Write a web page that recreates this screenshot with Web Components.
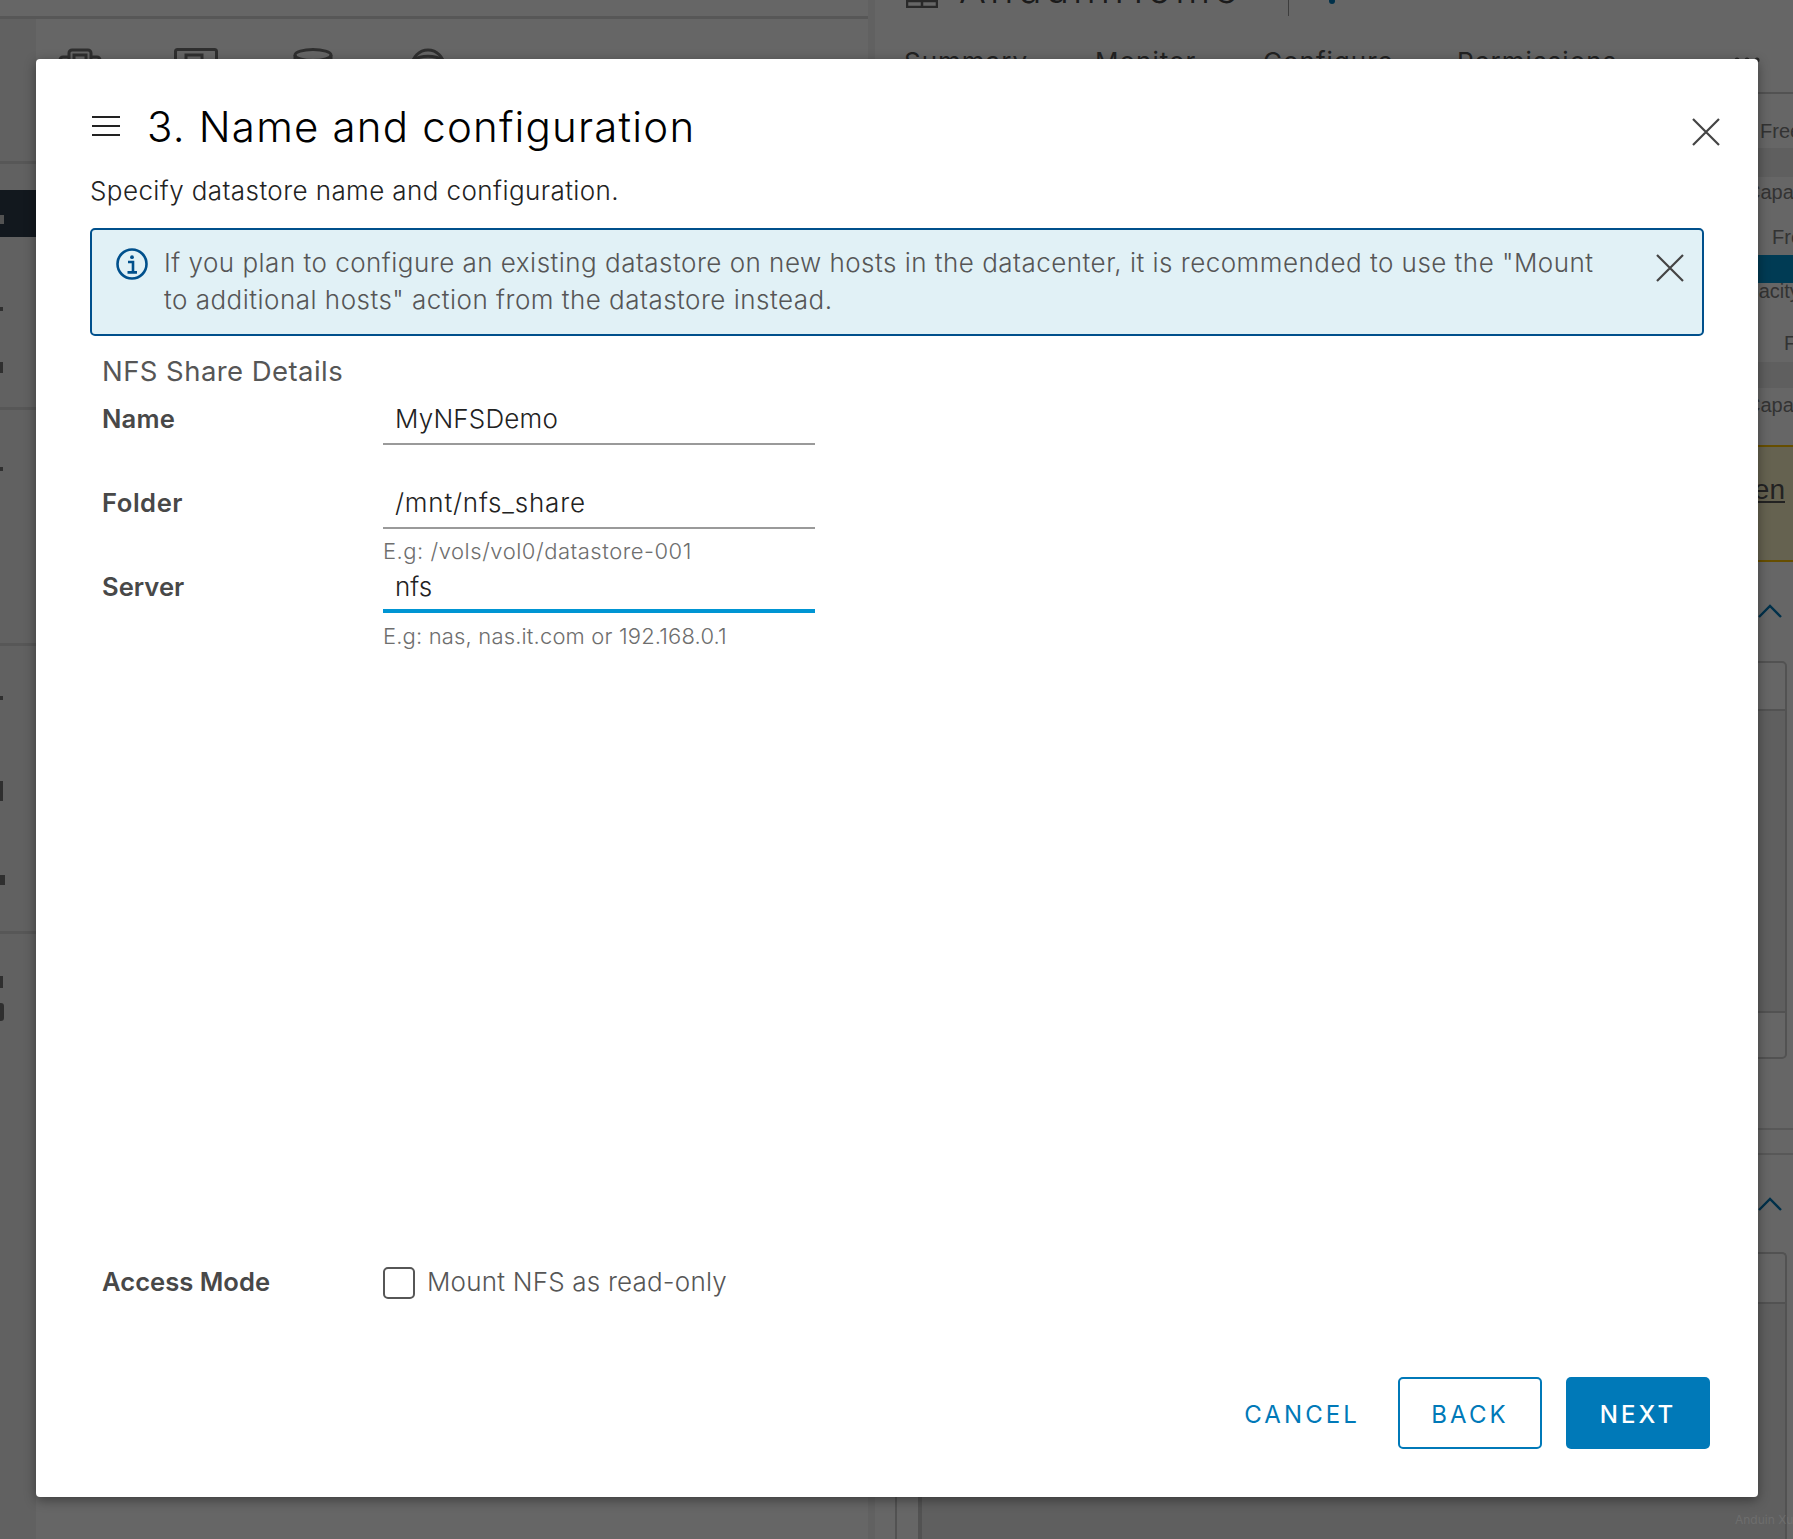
<!DOCTYPE html>
<html lang="en">
<head>
<meta charset="utf-8">
<title>New Datastore</title>
<style>
  html, body { margin: 0; height: 100%; background: #fff; }
  body { width: 1793px; height: 1539px; overflow: hidden; position: relative; font-family: "Inter", "Noto Sans", sans-serif; }
</style>
</head>
<body>
<vc-app-shell></vc-app-shell>
<vc-modal heading="3. Name and configuration" description="Specify datastore name and configuration.">
  <vc-alert>If you plan to configure an existing datastore on new hosts in the datacenter, it is recommended to use the "Mount to additional hosts" action from the datastore instead.</vc-alert>
  <vc-section-title>NFS Share Details</vc-section-title>
  <vc-form-row label="Name" value="MyNFSDemo" style="--value-ls:.18px;--label-ls:.17px"></vc-form-row>
  <vc-form-row label="Folder" value="/mnt/nfs_share" hint="E.g: /vols/vol0/datastore-001" style="--value-ls:.8px;--hint-ls:.52px;--label-ls:.54px"></vc-form-row>
  <vc-form-row label="Server" value="nfs" hint="E.g: nas, nas.it.com or 192.168.0.1" style="--hint-ls:.16px;--hint-mt:8px" focused></vc-form-row>
  <vc-check-row slot="bottom" label="Access Mode">Mount NFS as read-only</vc-check-row>
  <vc-button slot="footer" kind="flat">CANCEL</vc-button>
  <vc-button slot="footer" kind="outline">BACK</vc-button>
  <vc-button slot="footer" kind="solid">NEXT</vc-button>
</vc-modal>
<script>
const closeIcon = `<svg width="28" height="28" viewBox="0 0 28 28" fill="none" stroke="currentColor" stroke-width="2.2"><path d="M1 1 27 27M27 1 1 27"/></svg>`;

class VcAppShell extends HTMLElement {
  constructor() {
    super();
    this.attachShadow({ mode: 'open' });
    this.shadowRoot.innerHTML = `
      <style>
        :host { display: block; position: absolute; inset: 0; overflow: hidden; background: #fff; color: #565656; font-family: "Inter", sans-serif; }
        .shade { position: absolute; inset: 0; background: rgba(0,0,0,.6); }
        .panes { display: flex; height: 100%; }
        .left { width: 868px; flex: none; display: flex; flex-direction: column; }
        .splitter { width: 7px; flex: none; background: #f2f2f2; }
        .right { flex: 1; min-width: 0; display: flex; flex-direction: column; padding-left: 20px; }

        .crumb { height: 16px; flex: none; border-bottom: 3px solid #d9d9d9; }
        .left-body { flex: 1; display: grid; grid-template-columns: 36px 1fr; }
        .rail { background: #f3f3f3; display: flex; flex-direction: column; }
        .rail .line { height: 3px; background: #d9d9d9; flex: none; }
        .rail .frag { flex: none; background: #777; width: 3px; }
        .selected { height: 47px; margin-top: 26px; background: #2d3e4b; display: flex; align-items: center; flex: none; }
        .selected i { width: 4px; height: 9px; background: #ccc; margin-top: 12px; }
        .toolbar { display: flex; height: 31px; padding: 29px 0 0 22px; gap: 72px; }

        .title-row { height: 16px; flex: none; display: flex; align-items: flex-end; overflow: hidden; padding-left: 11px; }
        .title-row svg { flex: none; }
        .title-row b { font-weight: 300; font-size: 40px; line-height: 48px; letter-spacing: 4px; margin: 0 0 3px 21px; white-space: nowrap; color: #444; width: 329px; flex: none; }
        .title-row .sep { width: 1px; height: 16px; background: #999; flex: none; }
        .title-row .dot { width: 6px; height: 6px; border-radius: 50%; background: #0079b8; margin: -2px 0 0 40px; align-self: flex-start; flex: none; }
        .tabs { height: 78px; flex: none; padding: 28px 0 0 9px; box-sizing: border-box; display: flex; font-size: 26px; letter-spacing: 1px; line-height: 36px; color: #555; border-bottom: 2px solid #ccc; overflow: hidden; }
        .tabs span { display: block; flex: none; }
        .tabs svg { flex: none; }
        .outer { flex: 1; border-left: 2px solid #ccc; padding-left: 21px; min-height: 0; min-width: 0; display: flex; }
        .inner { flex: 1; min-width: 0; overflow: hidden; border-left: 2px solid #ccc; display: flex; flex-direction: column; font: 20px "Liberation Sans", sans-serif; color: #808080; }
        .row { flex: none; display: flex; align-items: center; white-space: nowrap; box-sizing: border-box; }
        .shaded { background: #eee; }
        .warn { flex: none; height: 117px; margin-top: 20px; background: #fdf4c7; border-top: 2px solid #ffc300; border-bottom: 2px solid #ffc300; box-sizing: border-box; font-size: 28px; color: #555; text-decoration: underline; display: flex; padding: 0 8px 28px 0; align-items: center; justify-content: flex-end; }
        .chev { flex: none; display: block; margin-left: 838px; }
        .card { flex: none; margin-right: 6px; border: 2px solid #ccc; border-radius: 5px; box-sizing: border-box; display: flex; flex-direction: column; }
        .card .head { height: 46px; flex: none; border-bottom: 2px solid #ccc; }
        .card .mid { flex: 1; background: #eee; }
        .card .foot { height: 44px; flex: none; border-top: 2px solid #ccc; }
        .mark { position: absolute; left: 1735px; top: 1512px; font: 12px "Inter", sans-serif; color: #7a7a7a; opacity: .55; white-space: nowrap; }
      </style>
      <div class="panes">
        <div class="left">
          <div class="crumb"></div>
          <div class="left-body">
            <div class="rail">
              <div style="height:142px;flex:none"></div>
              <div class="line"></div>
              <div class="selected"><i></i></div>
              <div class="frag" style="margin-top:70px;height:4px"></div>
              <div class="frag" style="margin-top:51px;height:11px"></div>
              <div class="line" style="margin-top:34px"></div>
              <div class="frag" style="margin-top:57px;height:4px"></div>
              <div class="line" style="margin-top:172px"></div>
              <div class="frag" style="margin-top:50px;height:4px"></div>
              <div class="frag" style="margin-top:81px;height:20px"></div>
              <div class="frag" style="margin-top:74px;height:10px;width:5px"></div>
              <div class="line" style="margin-top:46px"></div>
              <div class="frag" style="margin-top:42px;height:12px"></div>
              <div class="frag" style="margin-top:15px;height:18px;width:4px;border-radius:0 3px 3px 0"></div>
            </div>
            <div class="toolbar">
              <svg width="44" height="44" viewBox="0 0 44 44" fill="none" stroke="#777" stroke-width="3"><rect x="11" y="2" width="22" height="30" rx="3"/><rect x="16" y="7" width="12" height="7"/><path d="M11 9H5a3 3 0 0 0-3 3v16M33 9h6a3 3 0 0 1 3 3v16"/></svg>
              <svg width="44" height="44" viewBox="0 0 44 44" fill="none" stroke="#777" stroke-width="3"><rect x="1.5" y="1.5" width="41" height="30" rx="2"/><rect x="12" y="7" width="16" height="16"/></svg>
              <svg width="40" height="44" viewBox="0 0 40 44" fill="none" stroke="#777" stroke-width="3" style="margin-left:3px"><ellipse cx="20" cy="7" rx="18" ry="5.5"/><path d="M2 7v28M38 7v28"/></svg>
              <svg width="36" height="44" viewBox="0 0 36 44" fill="none" stroke="#777" stroke-width="3" style="margin-left:5px"><circle cx="18" cy="18" r="16"/><path d="M3 12c8-5 22-5 30 0"/></svg>
            </div>
          </div>
        </div>
        <div class="splitter"></div>
        <div class="right">
          <div class="title-row">
            <svg width="32" height="16" viewBox="0 0 32 16" fill="none" stroke="#666" stroke-width="2.5" style="margin-bottom:8px"><path d="M1 6v9h30V6M16 6v9M1 9h30"/></svg>
            <b>AnduinHome</b>
            <div class="sep"></div>
            <div class="dot"></div>
          </div>
          <div class="tabs">
            <span style="width:191px">Summary</span>
            <span style="width:168px">Monitor</span>
            <span style="width:194px">Configure</span>
            <span style="width:277px">Permissions</span>
            <svg width="26" height="36" viewBox="0 0 26 36" fill="#666"><circle cx="3" cy="16" r="2.5"/><circle cx="13" cy="16" r="2.5"/><circle cx="23" cy="16" r="2.5"/></svg>
          </div>
          <div class="outer">
            <div class="inner">
              <div class="row" style="height:54px;padding:20px 0 0 840px">Free</div>
              <div class="row shaded" style="height:29px"></div>
              <div class="row" style="height:38px;padding:0 0 8px 826px">Capacity</div>
              <div class="row" style="height:40px;padding:4px 0 0 852px">Free</div>
              <div class="row" style="height:28px;background:#0095d3"></div>
              <div class="row" style="height:27px;padding:0 0 10px 802px">Capacity</div>
              <div class="row" style="height:52px;padding:14px 0 0 864px">Free</div>
              <div class="row shaded" style="height:26px"></div>
              <div class="row" style="height:37px;padding:0 0 3px 826px">Capacity</div>
              <div class="warn">Open</div>
              <svg class="chev" style="margin-top:41px" width="24" height="16" viewBox="0 0 24 16" fill="none" stroke="#0079b8" stroke-width="2.4"><path d="M1 14 12 3l11 11"/></svg>
              <div class="card" style="height:398px;margin-top:42px">
                <div class="head"></div><div class="mid"></div><div class="foot"></div>
              </div>
              <div class="row" style="height:2px;margin-top:69px;background:#ddd"></div>
              <div class="row" style="height:2px;margin-top:23px;background:#ddd"></div>
              <svg class="chev" style="margin-top:41px" width="24" height="16" viewBox="0 0 24 16" fill="none" stroke="#0079b8" stroke-width="2.4"><path d="M1 14 12 3l11 11"/></svg>
              <div class="card" style="flex:1;margin-top:40px;border-bottom:0;border-radius:5px 5px 0 0">
                <div class="head" style="height:48px"></div><div class="mid"></div>
              </div>
            </div>
          </div>
        </div>
      </div>
      <div class="shade"></div>
      <div class="mark">Anduin Xue</div>
    `;
  }
}
customElements.define('vc-app-shell', VcAppShell);

class VcModal extends HTMLElement {
  constructor() {
    super();
    this.attachShadow({ mode: 'open' });
    this.shadowRoot.innerHTML = `
      <style>
        :host { display: flex; flex-direction: column; position: absolute; left: 36px; top: 59px; width: 1722px; height: 1438px; box-sizing: border-box; padding: 44px 54px 48px; background: #fff; border-radius: 4px; box-shadow: 0 3px 12px rgba(0,0,0,.4); font-family: "Inter", sans-serif; }
        header { display: flex; align-items: flex-start; height: 48px; flex: none; }
        .menu { flex: none; margin: 13px 27px 0 2px; display: block; }
        h3 { margin: 0; font-size: 42px; letter-spacing: 1.2px; line-height: 48px; font-weight: 300; color: #000; flex: 1; }
        .close { flex: none; margin: 15px -16px 0 0; color: #444; height: 28px; }
        p { margin: 22px 0 0; font-size: 26px; letter-spacing: .41px; line-height: 36px; color: #222; font-weight: 300; flex: none; }
        .body { flex: 1; min-height: 0; }
        .bottom { flex: none; margin-bottom: 78px; }
        footer { flex: none; display: flex; justify-content: flex-end; gap: 24px; margin-right: -6px; }
      </style>
      <header>
        <svg class="menu" width="28" height="20" viewBox="0 0 28 20" stroke="#222" stroke-width="2"><path d="M0 1h28M0 10h28M0 19h28"/></svg>
        <h3></h3>
        <div class="close">${closeIcon}</div>
      </header>
      <p></p>
      <div class="body"><slot></slot></div>
      <div class="bottom"><slot name="bottom"></slot></div>
      <footer><slot name="footer"></slot></footer>
    `;
    this.shadowRoot.querySelector('h3').textContent = this.getAttribute('heading');
    this.shadowRoot.querySelector('p').textContent = this.getAttribute('description');
  }
}
customElements.define('vc-modal', VcModal);

class VcAlert extends HTMLElement {
  constructor() {
    super();
    this.attachShadow({ mode: 'open' });
    this.shadowRoot.innerHTML = `
      <style>
        :host { display: flex; margin-top: 19px; box-sizing: border-box; height: 108px; border: 2px solid #00508c; border-radius: 5px; background: #e1f1f6; padding: 15px 0 0 24px; color: #565656; }
        svg.info { flex: none; margin: 3px 16px 0 0; }
        .text { flex: 1; font-size: 26px; letter-spacing: .48px; line-height: 36.6px; font-weight: 300; padding-right: 46px; }
        .close { flex: none; color: #444; margin: 9px 18px 0 0; height: 28px; }
      </style>
      <svg class="info" width="32" height="32" viewBox="0 0 32 32" fill="none" stroke="#00508c" stroke-width="2.6"><circle cx="16" cy="16" r="14.5"/><circle cx="16" cy="9.2" r="1.9" fill="#00508c" stroke="none"/><path d="M12 14h5v10M11.5 24.4h9.5"/></svg>
      <div class="text"><slot></slot></div>
      <div class="close">${closeIcon}</div>
    `;
  }
}
customElements.define('vc-alert', VcAlert);

class VcSectionTitle extends HTMLElement {
  constructor() {
    super();
    this.attachShadow({ mode: 'open' });
    this.shadowRoot.innerHTML = `
      <style>
        :host { display: block; margin: 17px 0 7px 12px; font-size: 27.5px; letter-spacing: .44px; line-height: 36px; color: #565656; font-weight: 400; }
      </style>
      <slot></slot>
    `;
  }
}
customElements.define('vc-section-title', VcSectionTitle);

class VcFormRow extends HTMLElement {
  constructor() {
    super();
    this.attachShadow({ mode: 'open' });
    const focused = this.hasAttribute('focused');
    this.shadowRoot.innerHTML = `
      <style>
        :host { display: grid; grid-template-columns: 281px 432px; height: 84px; margin-left: 12px; }
        label { font-size: 25.6px; letter-spacing: var(--label-ls, 0); font-weight: 600; line-height: 46px; color: #484848; }
        .input { box-sizing: border-box; height: 49px; padding-left: 12px; font-size: 26px; letter-spacing: var(--value-ls, 0); line-height: 46px; color: #222; font-weight: 300; border-bottom: ${focused ? '4px solid #0095d3' : '2px solid #9a9a9a'}; }
        .hint { font-size: 22px; letter-spacing: var(--hint-ls, 0); line-height: 30px; margin-top: var(--hint-mt, 7px); color: #6e6e6e; font-weight: 300; white-space: nowrap; }
      </style>
      <label></label>
      <div>
        <div class="input"></div>
        <div class="hint"></div>
      </div>
    `;
    this.shadowRoot.querySelector('label').textContent = this.getAttribute('label');
    this.shadowRoot.querySelector('.input').textContent = this.getAttribute('value');
    this.shadowRoot.querySelector('.hint').textContent = this.getAttribute('hint') || '';
  }
}
customElements.define('vc-form-row', VcFormRow);

class VcCheckRow extends HTMLElement {
  constructor() {
    super();
    this.attachShadow({ mode: 'open' });
    this.shadowRoot.innerHTML = `
      <style>
        :host { display: grid; grid-template-columns: 281px 1fr; height: 32px; margin-left: 12px; align-items: center; }
        label { font-size: 25.6px; font-weight: 600; line-height: 30px; margin-bottom: 2px; color: #484848; }
        .wrap { display: flex; align-items: center; gap: 12px; font-size: 26px; letter-spacing: .2px; line-height: 32px; font-weight: 300; color: #565656; }
        .box { width: 32px; height: 32px; box-sizing: border-box; border: 2px solid #565656; border-radius: 5px; flex: none; }
        .txt { margin-top: -2px; }
      </style>
      <label></label>
      <div class="wrap"><div class="box"></div><div class="txt"><slot></slot></div></div>
    `;
    this.shadowRoot.querySelector('label').textContent = this.getAttribute('label');
  }
}
customElements.define('vc-check-row', VcCheckRow);

class VcButton extends HTMLElement {
  constructor() {
    super();
    this.attachShadow({ mode: 'open' });
    this.shadowRoot.innerHTML = `
      <style>
        :host { display: flex; align-items: center; justify-content: center; box-sizing: border-box; height: 72px; min-width: 144px; padding: 2px 0 0; border-radius: 5px; font-size: 24px; letter-spacing: 3.1px; font-weight: 500; color: #0079b8; }
        :host([kind="flat"]) { min-width: 0; padding: 2px 14px 0 17px; font-weight: 400; }
        :host([kind="outline"]) { border: 2px solid #0079b8; font-weight: 400; }
        :host([kind="solid"]) { background: #0079b8; color: #fff; }
      </style>
      <slot></slot>
    `;
  }
}
customElements.define('vc-button', VcButton);
</script>
</body>
</html>
